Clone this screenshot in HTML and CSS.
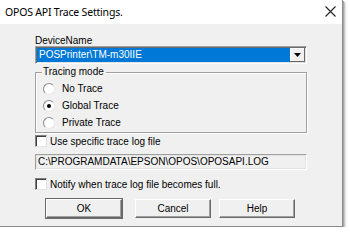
FILE: index.html
```html
<!DOCTYPE html>
<html>
<head>
<meta charset="utf-8">
<link rel="stylesheet" href="styles.css">
</head>
<body>
<div class="window">
  <div class="titlebar">
    <span class="title">OPOS API Trace Settings.</span>
    <svg class="close" width="11" height="11" viewBox="0 0 11 11"><path d="M0.5 0.5 L10.5 10.5 M10.5 0.5 L0.5 10.5" stroke="#222" stroke-width="1.1" fill="none"/></svg>
  </div>
  <div class="content">
    <div class="label">DeviceName</div>
    <div class="combo">
      <div class="combo-value"><span class="sel">POSPrinter\TM-m30IIE</span></div>
      <div class="combo-btn"><svg width="7" height="4" viewBox="0 0 7 4"><path d="M0 0 H7 L3.5 4 Z" fill="#000"/></svg></div>
    </div>
    <div class="group">
      <span class="legend">Tracing mode</span>
      <div class="radio-row"><span class="radio"></span><span>No Trace</span></div>
      <div class="radio-row"><span class="radio checked"></span><span>Global Trace</span></div>
      <div class="radio-row"><span class="radio"></span><span>Private Trace</span></div>
    </div>
    <div class="check-row first"><span class="check"></span><span>Use specific trace log file</span></div>
    <div class="edit">C:\PROGRAMDATA\EPSON\OPOS\OPOSAPI.LOG</div>
    <div class="check-row notify"><span class="check"></span><span>Notify when trace log file becomes full.</span></div>
    <div class="buttons">
      <div class="btn ok">OK</div>
      <div class="btn cancel">Cancel</div>
      <div class="btn help">Help</div>
    </div>
  </div>
</div>
</body>
</html>
```
FILE: styles.css
```css
html, body {
  margin: 0;
  padding: 0;
  background: #ffffff;
}
.window {
  width: 342px;
  height: 226px;
  background: #f0f0f0;
  border-right: 1px solid #8a8a8a;
  border-bottom: 1px solid #8a8a8a;
  box-shadow: 1px 1px 0 #a8a8a8, 2px 2px 1px #c8c8c8, 3px 3px 2px #e4e4e4;
  font-family: "Liberation Sans", Arial, sans-serif;
  font-size: 10px;
  color: #000;
  display: flex;
  flex-direction: column;
}
.titlebar {
  height: 24px;
  background: #ffffff;
  display: flex;
  align-items: center;
  justify-content: space-between;
  padding: 0 7px 0 5px;
}
.title {
  font-family: "Noto Sans", "Open Sans", sans-serif;
  font-size: 10.5px;
  letter-spacing: -0.2px;
  color: #000;
  margin-top: -1px;
}
.close {
  margin-right: -1px;
  margin-top: -1px;
}
.content {
  padding: 11px 0 0 35px;
  width: 272px;
  display: flex;
  flex-direction: column;
}
.label {
  height: 12px;
  line-height: 12px;
}
.combo {
  margin-top: -1px;
  height: 14px;
  border-top: 1px solid #a0a0a0;
  border-left: 1px solid #a0a0a0;
  border-right: 1px solid #ffffff;
  border-bottom: 1px solid #ffffff;
  box-shadow: inset 1px 1px 0 #696969, inset -1px -1px 0 #e3e3e3;
  padding: 1px;
  display: flex;
  background: #ffffff;
}
.combo-value {
  flex: 1;
  background: #0078d7;
  color: #fff;
  line-height: 14px;
  padding-left: 2px;
}
.combo-btn {
  width: 15px;
  background: #f0f0f0;
  box-shadow: inset -1px -1px 0 #696969, inset 1px 1px 0 #ffffff;
  display: flex;
  align-items: center;
  justify-content: center;
}
.group {
  position: relative;
  margin-top: 8px;
  padding: 7px 0 1px 7px;
  border: 1px solid #a0a0a0;
  box-shadow: 1px 1px 0 #ffffff, inset 1px 1px 0 #ffffff;
}
.legend {
  position: absolute;
  left: 6px;
  top: -7px;
  padding: 0 2px 0 1px;
  line-height: 12px;
  background: #f0f0f0;
}
.radio-row {
  display: flex;
  align-items: center;
  height: 17px;
}
.radio {
  width: 10px;
  height: 10px;
  border-radius: 50%;
  background: #fff;
  border: 1px solid;
  border-color: #8a8a8a #e8e8e8 #e8e8e8 #8a8a8a;
  margin-right: 7px;
  position: relative;
  flex: none;
}
.radio.checked::after {
  content: "";
  position: absolute;
  left: 3px;
  top: 3px;
  width: 4px;
  height: 4px;
  border-radius: 50%;
  background: #000;
}
.check-row {
  display: flex;
  align-items: center;
  height: 14px;
}
.check-row.first {
  margin-top: 1px;
}
.check {
  width: 10px;
  height: 10px;
  background: #fff;
  border-top: 1px solid #808080;
  border-left: 1px solid #808080;
  border-right: 1px solid #e3e3e3;
  border-bottom: 1px solid #e3e3e3;
  box-shadow: inset 1px 1px 0 #404040;
  margin-right: 3px;
  flex: none;
}
.edit {
  margin-top: 6px;
  height: 14px;
  line-height: 14px;
  padding-left: 2px;
  border-top: 1px solid #a0a0a0;
  border-left: 1px solid #a0a0a0;
  border-right: 1px solid #ffffff;
  border-bottom: 1px solid #ffffff;
  box-shadow: inset -1px -1px 0 #e3e3e3, inset 1px 1px 0 #e3e3e3;
  background: #f0f0f0;
}
.notify {
  margin-top: 7px;
}
.buttons {
  display: flex;
  margin-top: 8px;
  margin-left: 11px;
}
.btn {
  width: 74px;
  height: 17px;
  line-height: 17px;
  text-align: center;
  background: #f0f0f0;
  border-top: 1px solid #ffffff;
  border-left: 1px solid #ffffff;
  border-right: 1px solid #696969;
  border-bottom: 1px solid #696969;
  box-shadow: inset -1px -1px 0 #a0a0a0;
}
.btn.ok {
  outline: 1px solid #696969;
  outline-offset: 0;
}
.cancel {
  margin-left: 13px;
}
.help {
  margin-left: 8px;
}
```
